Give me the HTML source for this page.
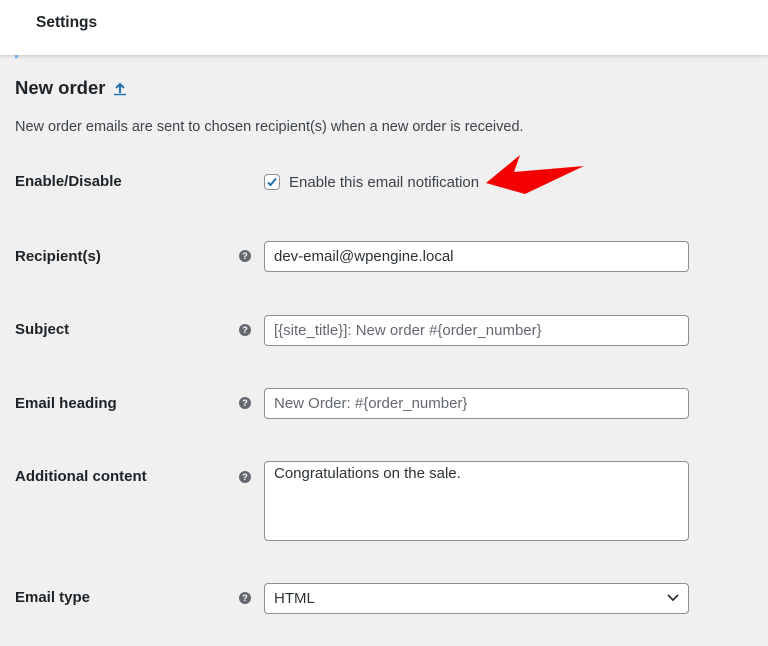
<!DOCTYPE html>
<html><head><style>
body{margin:0;width:768px;height:646px;background:#f0f0f1;font-family:"Liberation Sans",sans-serif;color:#1d2327;position:relative;overflow:hidden}
.hdr{position:absolute;left:0;top:0;width:768px;height:55px;background:#fff;box-shadow:0 1px 4px rgba(0,0,0,.18)}
.hdr span{position:absolute;left:36px;top:14px;font-size:15.5px;font-weight:bold}
.abs{position:absolute}
.lbl{position:absolute;left:15px;font-size:15px;font-weight:bold}
.inp{position:absolute;left:264px;width:425px;height:31px;background:#fff;border:1px solid #8c8f94;border-radius:4px;box-sizing:border-box;font-size:15px;padding:6px 9px;color:#2c3338}
.ph{color:#646970}
.q{position:absolute;left:239px;width:12px;height:12px;border-radius:50%;background:#646970;color:#fff;font-size:9px;font-weight:bold;text-align:center;line-height:12px}
</style></head><body>
<div class="hdr"><span>Settings</span></div>
<div class="abs" style="left:15px;top:55px;width:3px;height:3px;background:#72aee6"></div>
<div class="abs" style="left:15px;top:77px;font-size:18.5px;font-weight:bold">New order</div>
<svg class="abs" style="left:112px;top:80px" width="16" height="16" viewBox="0 0 16 16"><path d="M8 13V4M4 8l4-4 4 4" stroke="#2271b1" stroke-width="2" fill="none"/><path d="M2 14.5h12" stroke="#2271b1" stroke-width="1.5"/></svg>
<div class="abs" style="left:15px;top:119px;font-size:14.5px;color:#3c434a">New order emails are sent to chosen recipient(s) when a new order is received.</div>
<div class="lbl" style="top:173px">Enable/Disable</div>
<div class="abs" style="left:264px;top:174px;width:16px;height:16px;border:1px solid #8c8f94;border-radius:4px;background:#fff;box-sizing:border-box"></div>
<svg class="abs" style="left:265px;top:175px" width="14" height="14" viewBox="0 0 14 14"><path d="M3 7.5l2.5 2.5L11 3.5" stroke="#2271b1" stroke-width="2" fill="none"/></svg>
<div class="abs" style="left:289px;top:174px;font-size:15px;color:#3c434a">Enable this email notification</div>
<svg class="abs" style="left:0;top:0" width="768" height="646"><polygon points="486,183 520,155 514,172 584,166 525,194" fill="#f50000"/></svg>
<div class="lbl" style="top:248px">Recipient(s)</div><div class="q" style="top:250px">?</div>
<div class="inp" style="top:241px">dev-email@wpengine.local</div>
<div class="lbl" style="top:321px">Subject</div><div class="q" style="top:324px">?</div>
<div class="inp ph" style="top:315px">[{site_title}]: New order #{order_number}</div>
<div class="lbl" style="top:395px">Email heading</div><div class="q" style="top:397px">?</div>
<div class="inp ph" style="top:388px">New Order: #{order_number}</div>
<div class="lbl" style="top:468px">Additional content</div><div class="q" style="top:471px">?</div>
<div class="inp" style="top:461px;height:80px;padding-top:3px">Congratulations on the sale.</div>
<div class="lbl" style="top:589px">Email type</div><div class="q" style="top:592px">?</div>
<div class="inp" style="top:583px">HTML</div>
<svg class="abs" style="left:666px;top:592px" width="14" height="12" viewBox="0 0 14 12"><path d="M2 3l5 5 5-5" stroke="#2c3338" stroke-width="1.8" fill="none"/></svg>
</body></html>
